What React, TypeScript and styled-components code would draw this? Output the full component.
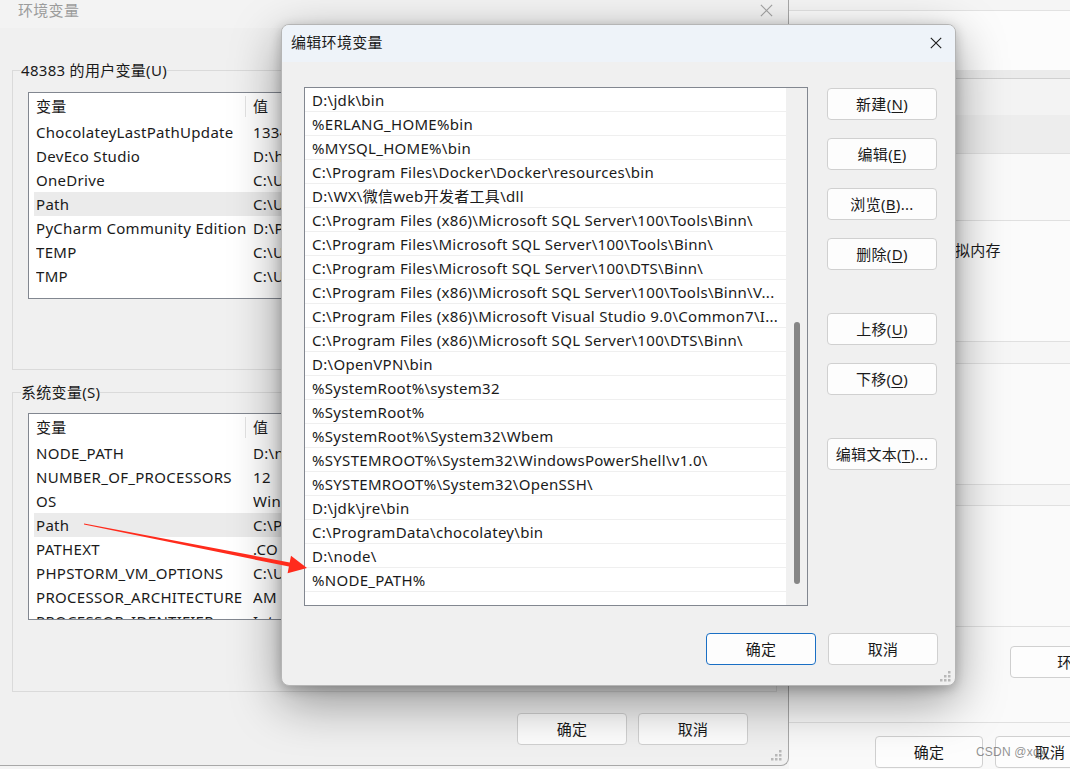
import React from "react";
import styled, { createGlobalStyle } from "styled-components";

const Global = createGlobalStyle`
  html, body { margin: 0; padding: 0; }
  body {
    width: 1070px;
    height: 769px;
    overflow: hidden;
    background: #f4f4f4;
    font-family: "Noto Sans", "Noto Sans CJK SC", sans-serif;
  }
`;

const Desktop = styled.div`
  position: relative;
  width: 1070px;
  height: 769px;
  overflow: hidden;
  display: flex;
  align-items: flex-start;
  background: #f4f4f4;
  font-family: "Noto Sans", "Noto Sans CJK SC", sans-serif;
  font-size: 15px;
  letter-spacing: 0.3px;
  color: #000;
`;

/* ---------- background window: 环境变量 ---------- */

const EnvWindow = styled.div`
  position: relative;
  width: 789px;
  height: 766px;
  box-sizing: border-box;
  flex-shrink: 0;
  background: #f0f0f0;
  border-right: 1px solid #a8a8a8;
  border-bottom: 1px solid #a8a8a8;
  border-bottom-right-radius: 8px;
  display: flex;
  flex-direction: column;
`;

const EnvTitleBar = styled.div`
  height: 28px;
  flex-shrink: 0;
  display: flex;
  align-items: flex-start;
  justify-content: space-between;
  padding: 0 15px 0 18px;
  background: #f3f3f3;
`;

const EnvTitle = styled.span`
  color: #9c9c9c;
  font-size: 15px;
  line-height: 20px;
`;

const TitleClose = styled.span<{ $top: number }>`
  display: flex;
  margin-top: ${(p) => p.$top}px;
`;

const Group = styled.fieldset<{ $top: number; $bottom: number }>`
  margin: ${(p) => p.$top}px 0 0 12px;
  width: 765px;
  box-sizing: border-box;
  border: 1px solid #dadada;
  padding: 0 0 ${(p) => p.$bottom}px 8px;
  min-width: 0;
`;

const Legend = styled.legend`
  padding: 0;
  font-size: 15px;
  line-height: 20px;
  color: #1a1a1a;
`;

/* the list continues under the dialog; only the part left of it is drawn */
const VarList = styled.div<{ $top: number }>`
  width: 257px;
  height: 207px;
  box-sizing: border-box;
  margin: ${(p) => p.$top}px 0 0 7px;
  border: 1px solid #828790;
  border-right: none;
  background: #fff;
  overflow: hidden;
`;

const VarHeader = styled.div`
  height: 27px;
  display: grid;
  grid-template-columns: 217px 1fr;
  align-items: center;
`;

const HeadCell = styled.div<{ $divider?: boolean }>`
  height: 21px;
  line-height: 21px;
  padding-left: 7px;
  border-right: ${(p) => (p.$divider ? "1px solid #e4e4e4" : "none")};
  color: #1a1a1a;
`;

const VarRow = styled.div<{ $selected?: boolean }>`
  height: 24px;
  margin-left: 5px;
  padding-left: 2px;
  display: grid;
  grid-template-columns: 217px 1fr;
  line-height: 24px;
  background: ${(p) => (p.$selected ? "#ebebeb" : "transparent")};
  white-space: nowrap;
  color: #1a1a1a;
`;

const Cell = styled.span`
  overflow: hidden;
`;

const EnvFooter = styled.div`
  display: flex;
  justify-content: flex-end;
  gap: 11px;
  padding-right: 40px;
  margin-top: 21px;
`;

/* ---------- background window on the right ---------- */

const SideWindow = styled.div`
  flex: 1;
  height: 769px;
  display: flex;
  flex-direction: column;
  background: #fafafa;
  overflow: hidden;
`;

const Band = styled.div<{ $h: number; $bg: string; $line?: string; $pl?: number; $pt?: number }>`
  height: ${(p) => p.$h}px;
  flex-shrink: 0;
  box-sizing: border-box;
  background: ${(p) => p.$bg};
  border-bottom: ${(p) => (p.$line ? `1px solid ${p.$line}` : "none")};
  padding: ${(p) => p.$pt ?? 0}px 0 0 ${(p) => p.$pl ?? 0}px;
  display: flex;
  align-items: flex-start;
  gap: 12px;
  white-space: nowrap;
`;

const SideText = styled.span`
  font-size: 15px;
  line-height: 20px;
  color: #1a1a1a;
`;

/* ---------- buttons ---------- */

const Button = styled.button<{ $primary?: boolean; $w?: number }>`
  width: ${(p) => p.$w ?? 110}px;
  height: 32px;
  flex-shrink: 0;
  box-sizing: border-box;
  padding: 0;
  background: #fdfdfd;
  border: 1px solid ${(p) => (p.$primary ? "#1a6fc4" : "#d0d0d0")};
  border-radius: 4px;
  font-family: "Noto Sans", "Noto Sans CJK SC", sans-serif;
  font-size: 15px;
  letter-spacing: 0.3px;
  line-height: 20px;
  color: #1a1a1a;
  display: flex;
  align-items: center;
  justify-content: center;
  white-space: nowrap;
  u { text-underline-offset: 2px; }
`;

/* ---------- dialog: 编辑环境变量 ---------- */

const Dialog = styled.div`
  position: absolute;
  left: 281px;
  top: 24px;
  width: 675px;
  height: 662px;
  box-sizing: border-box;
  z-index: 2;
  background: #f0f0f0;
  border: 1px solid #b5b5b5;
  border-radius: 8px;
  overflow: hidden;
  box-shadow: 0 16px 50px rgba(0, 0, 0, 0.4), 0 3px 12px rgba(0, 0, 0, 0.22);
  display: flex;
  flex-direction: column;
`;

const DialogTitleBar = styled.div`
  height: 37px;
  flex-shrink: 0;
  box-sizing: border-box;
  background: #eef3f9;
  display: flex;
  align-items: flex-start;
  justify-content: space-between;
  padding: 7px 13px 0 9px;
`;

const DialogTitle = styled.span`
  font-size: 15px;
  line-height: 20px;
  color: #1b1b1b;
`;

const DialogBody = styled.div`
  display: grid;
  grid-template-columns: 504px 110px;
  column-gap: 19px;
  padding: 25px 0 0 22px;
`;

const PathList = styled.div`
  height: 519px;
  box-sizing: border-box;
  border: 1px solid #828790;
  background: #fff;
  display: flex;
`;

const PathRows = styled.div`
  flex: 1;
  display: flex;
  flex-direction: column;
`;

const PathRow = styled.div`
  height: 24px;
  flex-shrink: 0;
  box-sizing: border-box;
  border-bottom: 1px solid #efefef;
  padding-left: 7px;
  line-height: 24px;
  white-space: nowrap;
  overflow: hidden;
  color: #1a1a1a;
`;

const ScrollTrack = styled.div`
  width: 21px;
  background: #f0f0f0;
  display: flex;
  flex-direction: column;
  align-items: center;
`;

const ScrollThumb = styled.div`
  width: 6px;
  height: 262px;
  margin-top: 234px;
  border-radius: 3px;
  background: #868686;
`;

const ActionColumn = styled.div`
  display: flex;
  flex-direction: column;
  padding-top: 1px;
`;

const ActionSlot = styled.div<{ $gap: number }>`
  margin-top: ${(p) => p.$gap}px;
`;

const DialogFooter = styled.div`
  display: flex;
  justify-content: flex-end;
  gap: 12px;
  padding-right: 17px;
  margin-top: 27px;
`;

const Grip = styled.div<{ $r: number; $b: number }>`
  position: absolute;
  right: ${(p) => p.$r}px;
  bottom: ${(p) => p.$b}px;
  display: flex;
`;

const Overlay = styled.svg`
  position: absolute;
  left: 0;
  top: 0;
  z-index: 3;
  pointer-events: none;
`;

const Watermark = styled.span`
  position: absolute;
  left: 976px;
  top: 744px;
  z-index: 4;
  font-family: "Liberation Sans", "Noto Sans", sans-serif;
  font-size: 12px;
  line-height: 16px;
  color: rgba(110, 110, 110, 0.75);
  letter-spacing: 0.2px;
`;

/* ---------- drawings ---------- */

const CloseIcon = ({ size, color }: { size: number; color: string }) => (
  <svg width={size} height={size} viewBox="0 0 12 12">
    <path d="M0.8 0.8L11.2 11.2M11.2 0.8L0.8 11.2" stroke={color} strokeWidth="1.1" fill="none" />
  </svg>
);

const GripIcon = () => (
  <svg width="11" height="11" viewBox="0 0 11 11">
    {[
      [8, 0],
      [4, 4],
      [8, 4],
      [0, 8],
      [4, 8],
      [8, 8],
    ].map(([x, y], i) => (
      <rect key={i} x={x} y={y} width="2.5" height="2.5" fill="#b8b8b8" />
    ))}
  </svg>
);

/* ---------- data ---------- */

const userVars: [string, string, boolean?][] = [
  ["ChocolateyLastPathUpdate", "1334"],
  ["DevEco Studio", "D:\\h"],
  ["OneDrive", "C:\\U"],
  ["Path", "C:\\U", true],
  ["PyCharm Community Edition", "D:\\P"],
  ["TEMP", "C:\\U"],
  ["TMP", "C:\\U"],
];

const sysVars: [string, string, boolean?][] = [
  ["NODE_PATH", "D:\\n"],
  ["NUMBER_OF_PROCESSORS", "12"],
  ["OS", "Win"],
  ["Path", "C:\\P", true],
  ["PATHEXT", ".CO"],
  ["PHPSTORM_VM_OPTIONS", "C:\\U"],
  ["PROCESSOR_ARCHITECTURE", "AM"],
  ["PROCESSOR_IDENTIFIER", "Int"],
];

const paths = [
  "D:\\jdk\\bin",
  "%ERLANG_HOME%bin",
  "%MYSQL_HOME%\\bin",
  "C:\\Program Files\\Docker\\Docker\\resources\\bin",
  "D:\\WX\\微信web开发者工具\\dll",
  "C:\\Program Files (x86)\\Microsoft SQL Server\\100\\Tools\\Binn\\",
  "C:\\Program Files\\Microsoft SQL Server\\100\\Tools\\Binn\\",
  "C:\\Program Files\\Microsoft SQL Server\\100\\DTS\\Binn\\",
  "C:\\Program Files (x86)\\Microsoft SQL Server\\100\\Tools\\Binn\\V...",
  "C:\\Program Files (x86)\\Microsoft Visual Studio 9.0\\Common7\\I...",
  "C:\\Program Files (x86)\\Microsoft SQL Server\\100\\DTS\\Binn\\",
  "D:\\OpenVPN\\bin",
  "%SystemRoot%\\system32",
  "%SystemRoot%",
  "%SystemRoot%\\System32\\Wbem",
  "%SYSTEMROOT%\\System32\\WindowsPowerShell\\v1.0\\",
  "%SYSTEMROOT%\\System32\\OpenSSH\\",
  "D:\\jdk\\jre\\bin",
  "C:\\ProgramData\\chocolatey\\bin",
  "D:\\node\\",
  "%NODE_PATH%",
];

const actions: { label: string; key: string; tail?: string; gap: number }[] = [
  { label: "新建", key: "N", gap: 0 },
  { label: "编辑", key: "E", gap: 18 },
  { label: "浏览", key: "B", tail: "...", gap: 18 },
  { label: "删除", key: "D", gap: 18 },
  { label: "上移", key: "U", gap: 43 },
  { label: "下移", key: "O", gap: 18 },
  { label: "编辑文本", key: "T", tail: "...", gap: 43 },
];

const VarTable = ({ rows, top }: { rows: [string, string, boolean?][]; top: number }) => (
  <VarList $top={top}>
    <VarHeader>
      <HeadCell $divider>变量</HeadCell>
      <HeadCell>值</HeadCell>
    </VarHeader>
    {rows.map(([name, value, sel]) => (
      <VarRow key={name} $selected={sel}>
        <Cell>{name}</Cell>
        <Cell>{value}</Cell>
      </VarRow>
    ))}
  </VarList>
);

export default function App() {
  return (
    <>
      <Global />
      <Desktop>
        <EnvWindow>
          <EnvTitleBar>
            <EnvTitle>环境变量</EnvTitle>
            <TitleClose $top={4}>
              <CloseIcon size={13} color="#a3a3a3" />
            </TitleClose>
          </EnvTitleBar>
          <Group $top={32} $bottom={70}>
            <Legend>48383 的用户变量(U)</Legend>
            <VarTable rows={userVars} top={12} />
          </Group>
          <Group $top={12} $bottom={71}>
            <Legend>系统变量(S)</Legend>
            <VarTable rows={sysVars} top={11} />
          </Group>
          <EnvFooter>
            <Button>确定</Button>
            <Button>取消</Button>
          </EnvFooter>
          <Grip $r={6} $b={4}>
            <GripIcon />
          </Grip>
        </EnvWindow>

        <SideWindow>
          <Band $h={11} $bg="#f5f5f5" $line="#e2e2e2" />
          <Band $h={59} $bg="#fcfcfc" />
          <Band $h={9} $bg="#ebebeb" $line="#d0d0d0" />
          <Band $h={36} $bg="#f3f3f3" />
          <Band $h={39} $bg="#ededed" $line="#e0e0e0" />
          <Band $h={67} $bg="#f9f9f9" $line="#e0e0e0" />
          <Band $h={121} $bg="#fbfbfb" $line="#e0e0e0" $pl={166} $pt={19}>
            <SideText>拟内存</SideText>
          </Band>
          <Band $h={22} $bg="#f6f6f6" $line="#e0e0e0" />
          <Band $h={121} $bg="#fafafa" $line="#e0e0e0" />
          <Band $h={21} $bg="#f6f6f6" $line="#e0e0e0" />
          <Band $h={121} $bg="#fafafa" $line="#e0e0e0" />
          <Band $h={96} $bg="#fafafa" $line="#e0e0e0" $pl={221} $pt={19}>
            <Button $w={190}>环境变量(N)...</Button>
          </Band>
          <Band $h={46} $bg="#f9f9f9" $pl={86} $pt={13}>
            <Button $w={108}>确定</Button>
            <Button>取消</Button>
          </Band>
        </SideWindow>

        <Dialog>
          <DialogTitleBar>
            <DialogTitle>编辑环境变量</DialogTitle>
            <TitleClose $top={5}>
              <CloseIcon size={12} color="#1b1b1b" />
            </TitleClose>
          </DialogTitleBar>
          <DialogBody>
            <PathList>
              <PathRows>
                {paths.map((p) => (
                  <PathRow key={p}>{p}</PathRow>
                ))}
              </PathRows>
              <ScrollTrack>
                <ScrollThumb />
              </ScrollTrack>
            </PathList>
            <ActionColumn>
              {actions.map((a) => (
                <ActionSlot key={a.label} $gap={a.gap}>
                  <Button>
                    {a.label}(<u>{a.key}</u>){a.tail ?? ""}
                  </Button>
                </ActionSlot>
              ))}
            </ActionColumn>
          </DialogBody>
          <DialogFooter>
            <Button $primary>确定</Button>
            <Button>取消</Button>
          </DialogFooter>
          <Grip $r={4} $b={3}>
            <GripIcon />
          </Grip>
        </Dialog>

        <Overlay width="1070" height="769" viewBox="0 0 1070 769">
          <polygon
            points="84,523.6 289.7,562.4 291,555.7 307,568 287.6,573.3 288.9,566.6 84,524.4"
            fill="#ff2b1c"
          />
        </Overlay>

        <Watermark>CSDN @xqx_</Watermark>
      </Desktop>
    </>
  );
}
